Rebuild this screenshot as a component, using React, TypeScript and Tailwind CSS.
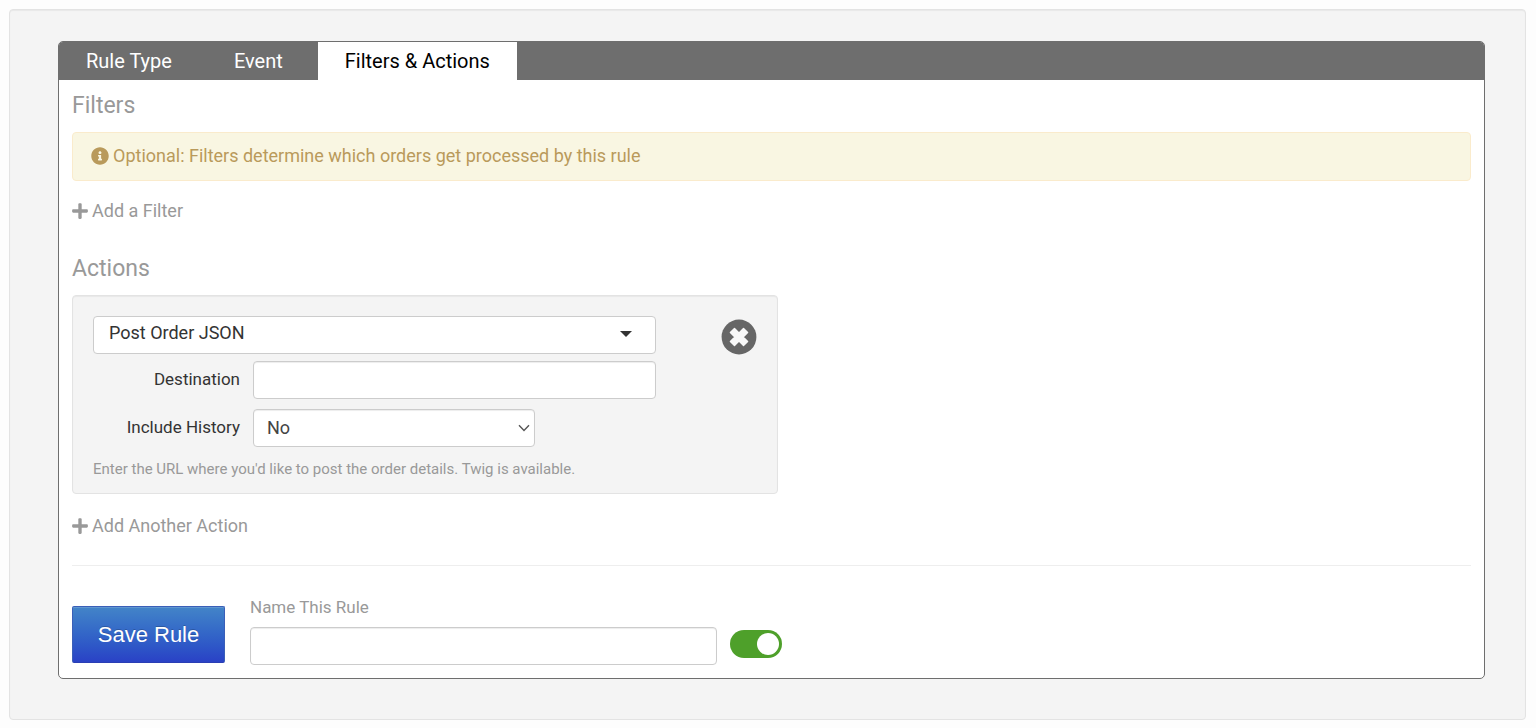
import { useState } from "react";
import type { ReactNode } from "react";
import { FaInfoCircle, FaPlus } from "react-icons/fa";

const tabs = ["Rule Type", "Event", "Filters & Actions"];

const fieldClass =
  "block h-[38px] rounded border border-[#cccccc] bg-white px-[13px] text-lg text-[#444444] outline-none shadow-[inset_0_1px_1px_rgba(0,0,0,0.075)] focus:border-[#66afe9]";

function AddLink({ children }: { children: ReactNode }) {
  return (
    <a href="#" className="flex w-fit items-center gap-1 text-lg leading-6 text-[#999999]">
      <FaPlus className="h-[18px] w-4" aria-hidden="true" />
      {children}
    </a>
  );
}

function RemoveIcon() {
  return (
    <svg viewBox="0 0 36 36" className="size-9" aria-hidden="true">
      <circle cx="18" cy="18" r="17.4" fill="#666666" />
      <path
        d="M13.5 9.4 18 13.9 22.5 9.4 26.6 13.5 22.1 18 26.6 22.5 22.5 26.6 18 22.1 13.5 26.6 9.4 22.5 13.9 18 9.4 13.5Z"
        fill="#f8f8f8"
        stroke="#f8f8f8"
        strokeWidth="1.4"
        strokeLinejoin="round"
      />
    </svg>
  );
}

export default function App() {
  const [active, setActive] = useState(2);
  const [enabled, setEnabled] = useState(true);

  return (
    <div className="min-h-screen bg-[#fdfdfd] py-[9px] pr-[10px] pl-[9px] font-['Roboto',sans-serif]">
      <main className="rounded border border-[#e3e3e3] bg-[#f4f4f4] pt-[31px] pr-10 pb-10 pl-12 shadow-[inset_0_1px_1px_rgba(0,0,0,0.05)]">
        <div className="overflow-hidden rounded-[5px] border border-[#6e6e6e] bg-white">
          <nav className="flex gap-2 bg-[#6e6e6e]" role="tablist">
            {tabs.map((tab, index) => (
              <button
                key={tab}
                type="button"
                role="tab"
                aria-selected={active === index}
                onClick={() => setActive(index)}
                className={
                  active === index
                    ? "h-[38px] bg-white px-[27px] text-xl text-black"
                    : "h-[38px] px-[27px] text-xl text-white"
                }
              >
                {tab}
              </button>
            ))}
          </nav>

          <div className="px-[13px] pt-3 pb-[13px]">
            <h2 className="text-[23px] leading-7 text-[#999999]">Filters</h2>
            <p className="mt-3 flex h-[49px] items-center gap-1 rounded border border-[#faebcc] bg-[#f9f6e2] px-[18px] pb-[2px] text-lg text-[#b99a5b]">
              <FaInfoCircle className="size-[18px]" aria-hidden="true" />
              Optional: Filters determine which orders get processed by this rule
            </p>
            <div className="mt-[18px]">
              <AddLink>Add a Filter</AddLink>
            </div>

            <h2 className="mt-8 text-[23px] leading-7 text-[#999999]">Actions</h2>
            <section className="mt-3 flex w-[706px] max-w-full items-start justify-between rounded border border-[#e3e3e3] bg-[#f4f4f4] px-5 pt-5 pb-[14px] shadow-[inset_0_1px_1px_rgba(0,0,0,0.05)]">
              <div className="w-[563px]">
                <div className="relative">
                  <select
                    aria-label="Action"
                    className="block h-[38px] w-full appearance-none rounded border border-[#cccccc] bg-white px-[15px] pb-1 text-lg text-[#333333] outline-none"
                  >
                    <option>Post Order JSON</option>
                  </select>
                  <svg
                    viewBox="0 0 12 6"
                    className="pointer-events-none absolute top-[15px] right-6 h-[6px] w-3"
                    aria-hidden="true"
                  >
                    <path d="M0 0H12L6 6Z" fill="#333333" />
                  </svg>
                </div>
                <div className="mt-[7px] flex items-center justify-end gap-[13px]">
                  <label htmlFor="destination" className="text-[17px] text-[#333333]">
                    Destination
                  </label>
                  <input id="destination" type="text" className={`${fieldClass} w-[403px]`} />
                </div>
                <div className="mt-[10px] flex items-center">
                  <label
                    htmlFor="history"
                    className="mr-[13px] w-[147px] text-right text-[17px] text-[#333333]"
                  >
                    Include History
                  </label>
                  <div className="relative">
                    <select id="history" className={`${fieldClass} w-[282px] appearance-none`}>
                      <option>No</option>
                      <option>Yes</option>
                    </select>
                    <svg
                      viewBox="0 0 12 8"
                      className="pointer-events-none absolute top-[15px] right-[5px] h-2 w-3"
                      aria-hidden="true"
                    >
                      <path d="M1 1.2 6 6.4 11 1.2" fill="none" stroke="#555555" strokeWidth="1.4" />
                    </svg>
                  </div>
                </div>
                <p className="mt-3 text-[15px] leading-5 text-[#999999]">
                  Enter the URL where you'd like to post the order details. Twig is available.
                </p>
              </div>
              <button type="button" aria-label="Remove action" className="mt-[3px]">
                <RemoveIcon />
              </button>
            </section>
            <div className="mt-5">
              <AddLink>Add Another Action</AddLink>
            </div>

            <hr className="mt-[27px] border-[#eeeeee]" />

            <div className="mt-[29px] flex items-end">
              <button
                type="button"
                className="mb-[2px] h-[57px] w-[153px] rounded-[2px] border border-[#3a5fb8] border-b-[#2a3fb4] bg-linear-to-b from-[#4384c8] to-[#2a41c6] font-['Liberation_Sans',sans-serif] text-[22px] text-white shadow-[inset_0_1px_0_rgba(255,255,255,0.15)] [text-shadow:0_-1px_0_rgba(0,0,0,0.2)]"
              >
                Save Rule
              </button>
              <div className="ml-[25px]">
                <label htmlFor="rule-name" className="block text-[17px] leading-6 text-[#999999]">
                  Name This Rule
                </label>
                <input id="rule-name" type="text" className={`${fieldClass} mt-2 w-[467px]`} />
              </div>
              <label className="mb-[7px] ml-[13px] flex h-7 w-[52px] cursor-pointer items-center rounded-full bg-[#bbbbbb] p-[3px] has-checked:justify-end has-checked:bg-[#4ea02a]">
                <input
                  type="checkbox"
                  aria-label="Rule enabled"
                  className="sr-only"
                  checked={enabled}
                  onChange={(event) => setEnabled(event.target.checked)}
                />
                <span className="size-[22px] rounded-full bg-white" />
              </label>
            </div>
          </div>
        </div>
      </main>
    </div>
  );
}
